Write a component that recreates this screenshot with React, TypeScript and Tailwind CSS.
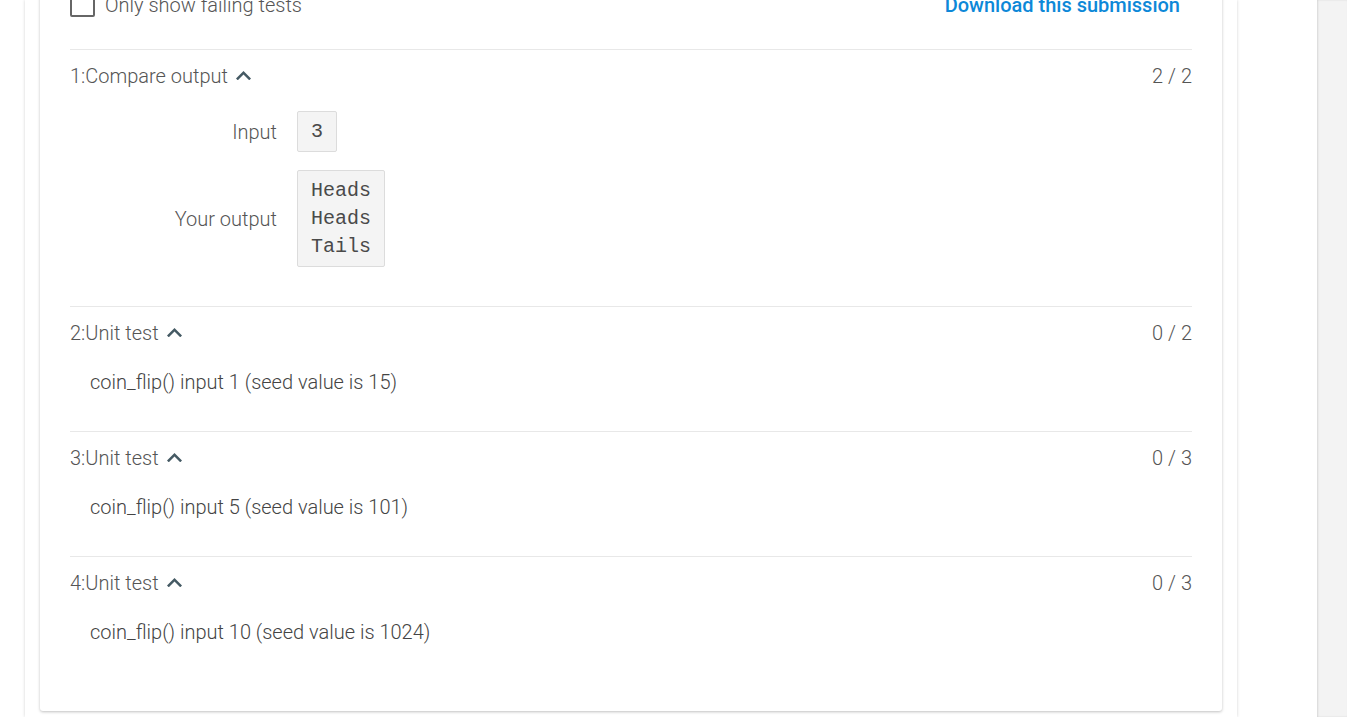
const ChevronUp = () => (
  <svg viewBox="6 8 12 7.41" width="15" height="9.3" className="ml-[8px] fill-[#455a64]">
    <path d="M12 8l-6 6 1.41 1.41L12 10.83l4.59 4.58L18 14z" />
  </svg>
);

interface TestProps {
  title: string;
  score: string;
  children: React.ReactNode;
}

const TestSection = ({ title, score, children }: TestProps) => {
  return (
    <div className="border-t border-[#e8e8e8]">
      <div className="flex h-[51px] items-center justify-between text-[20px] text-[#555]">
        <div className="flex items-center">
          <span>{title}</span>
          <ChevronUp />
        </div>
        <span>{score}</span>
      </div>
      {children}
    </div>
  );
};

const UnitDesc = ({ text }: { text: string }) => (
  <div className="mt-[12px] pb-[37px] pl-[20px] text-[20px] leading-[24px] text-[#444]">{text}</div>
);

const CodeBox = ({ lines }: { lines: string[] }) => (
  <div className="rounded-[2px] border border-[#dcdcdc] bg-[#f4f4f4] px-[13px] pt-[6px] pb-[5px] font-['Liberation_Mono',monospace] text-[20px] font-normal leading-[28px] text-[#4a4a4a]">
    {lines.map((l, i) => (
      <div key={i}>{l}</div>
    ))}
  </div>
);

export default function App() {
  return (
    <div className="flex h-[717px] overflow-hidden bg-white font-['Roboto',sans-serif] font-light">
      <div className="w-[25px] shrink-0" />
      <div className="w-[1212px] shrink-0 px-[15px] shadow-[0_0_3px_rgba(0,0,0,0.18)]">
        <div className="-mt-[43px] rounded-[3px] bg-white px-[30px] pt-[30px] pb-[30px] shadow-[0_1px_3px_rgba(0,0,0,0.25)]">
          <div className="mb-[26px] flex h-[36px] items-center justify-between">
            <label className="flex items-center text-[20px] text-[#555]">
              <span className="mr-[10px] h-[24px] w-[25px] rounded-[2px] border-2 border-[#666]" />
              Only show failing tests
            </label>
            <button className="mr-[12px] text-[20px] font-medium text-[#0d88d8]">Download this submission</button>
          </div>

          <TestSection title="1:Compare output" score="2 / 2">
            <div className="mt-[10px] flex flex-col gap-[18px] pb-[39px] text-[20px] text-[#555]">
              <div className="flex items-center">
                <div className="w-[207px] text-right">Input</div>
                <div className="ml-[20px]">
                  <CodeBox lines={['3']} />
                </div>
              </div>
              <div className="flex items-center">
                <div className="w-[207px] text-right">Your output</div>
                <div className="ml-[20px]">
                  <CodeBox lines={['Heads', 'Heads', 'Tails']} />
                </div>
              </div>
            </div>
          </TestSection>

          <TestSection title="2:Unit test" score="0 / 2">
            <UnitDesc text="coin_flip() input 1 (seed value is 15)" />
          </TestSection>
          <TestSection title="3:Unit test" score="0 / 3">
            <UnitDesc text="coin_flip() input 5 (seed value is 101)" />
          </TestSection>
          <TestSection title="4:Unit test" score="0 / 3">
            <UnitDesc text="coin_flip() input 10 (seed value is 1024)" />
          </TestSection>
        </div>
      </div>
      <div className="w-[80px] shrink-0" />
      <div className="flex-1 bg-[#f3f3f3] shadow-[inset_1px_0_2px_rgba(0,0,0,0.12)]" />
    </div>
  );
}
